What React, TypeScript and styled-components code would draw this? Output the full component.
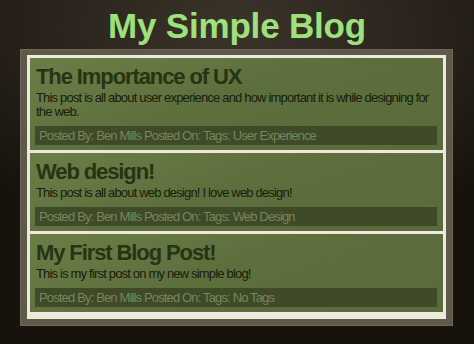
import styled, { createGlobalStyle } from 'styled-components';

interface PostType {
  id: number;
  title: string;
  body: string;
  tags: string;
}

const posts: PostType[] = [
  {
    id: 1,
    title: 'The Importance of UX',
    body: 'This post is all about user experience and how important it is while designing for the web.',
    tags: 'User Experience',
  },
  {
    id: 2,
    title: 'Web design!',
    body: 'This post is all about web design! I love web design!',
    tags: 'Web Design',
  },
  {
    id: 3,
    title: 'My First Blog Post!',
    body: 'This is my first post on my new simple blog!',
    tags: 'No Tags',
  },
];

export default function App() {
  return (
    <>
      <GlobalStyle />
      <Page>
        <Header>My Simple Blog</Header>
        <Frame>
          <PostList>
            {posts.map((post) => (
              <Post key={post.id}>
                <PostTitle>{post.title}</PostTitle>
                <PostBody>{post.body}</PostBody>
                <PostMeta>Posted By: Ben Mills Posted On: Tags: {post.tags}</PostMeta>
              </Post>
            ))}
          </PostList>
        </Frame>
      </Page>
    </>
  );
}

const GlobalStyle = createGlobalStyle`
  html, body {
    margin: 0;
    padding: 0;
  }

  body {
    font-family: "Liberation Sans", Arial, sans-serif;
    background: #19130e;
  }
`;

const Page = styled.div`
  width: 474px;
  height: 344px;
  overflow: hidden;

  background: radial-gradient(ellipse 75% 60% at 50% 8%, #3b3429 0%, #2a241d 50%, #18120d 100%);
`;

const Header = styled.h1`
  margin: 0;
  padding-top: 6px;
  height: 49px;
  box-sizing: border-box;

  font-size: 35px;
  line-height: 40px;
  font-weight: bold;
  letter-spacing: -0.2px;
  text-align: center;
  color: #9ee07c;
`;

const Frame = styled.div`
  margin: 0 21px 0 20px;
  padding: 6px 7px 7px 7px;

  background: #5f594c;
  box-shadow: inset 0 0 0 1px #6c6657;
`;

const PostList = styled.div`
  display: flex;
  flex-direction: column;
  gap: 3px;

  padding: 3px 3px 7px 3px;
  background: #eeeadb;
`;

const Post = styled.div`
  display: flex;
  flex-direction: column;

  padding: 7px 6px 5px 5px;
  background: linear-gradient(160deg, #6b7e46 0%, #5e6f3e 45%, #5a6a3b 100%);
`;

const PostTitle = styled.h2`
  margin: 0 0 2px 1px;

  font-size: 22px;
  line-height: 24px;
  font-weight: bold;
  letter-spacing: -1.1px;
  color: #263414;
`;

const PostBody = styled.p`
  margin: 0 0 7px 1px;

  font-size: 13px;
  line-height: 14px;
  letter-spacing: -0.82px;
  color: #16200b;
`;

const PostMeta = styled.div`
  height: 19px;
  padding-left: 4px;

  font-size: 13px;
  line-height: 19px;
  letter-spacing: -0.85px;
  color: #76875a;
  background: #3e4a28;
`;
